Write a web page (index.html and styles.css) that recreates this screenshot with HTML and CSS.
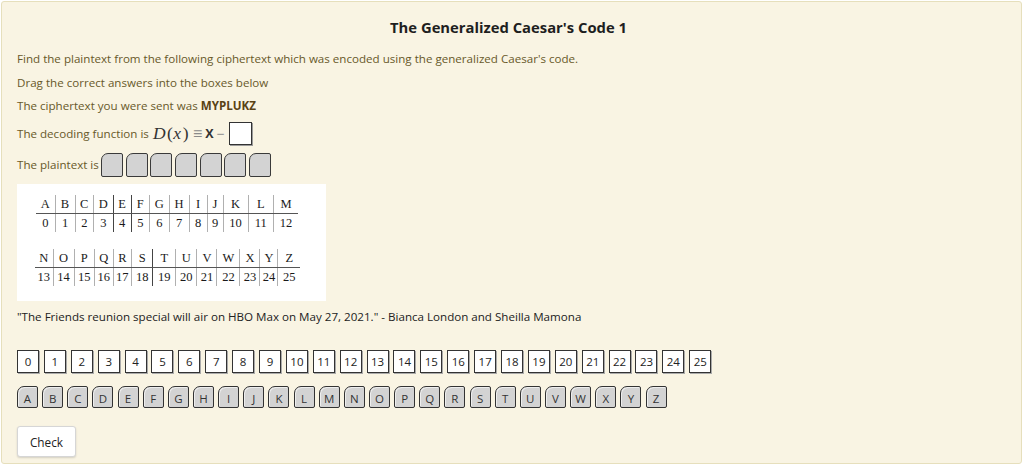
FILE: index.html
```html
<!DOCTYPE html>
<html>
<head>
<meta charset="utf-8">
<link rel="stylesheet" href="styles.css">
</head>
<body>
<div class="card">
  <h1 class="title">The Generalized Caesar's Code 1</h1>
  <p class="line">Find the plaintext from the following ciphertext which was encoded using the generalized Caesar's code.</p>
  <p class="line">Drag the correct answers into the boxes below</p>
  <p class="line">The ciphertext you were sent was <b class="cipher">MYPLUKZ</b></p>
  <div class="row decode">
    <span class="line-text">The decoding function is</span>
    <span class="math"><i>D</i>(<i>x</i>)</span>
    <span class="op eq">≡</span>
    <span class="bx">X</span>
    <span class="op">−</span>
    <span class="drop"></span>
  </div>
  <div class="row plain">
    <span class="line-text">The plaintext is</span>
    <span class="slots">
      <span class="slot"></span><span class="slot"></span><span class="slot"></span><span class="slot"></span><span class="slot"></span><span class="slot"></span><span class="slot"></span>
    </span>
  </div>
  <div class="img-box">
    <table class="alpha t1">
      <colgroup><col style="width:19px"><col style="width:20px"><col style="width:18.5px"><col style="width:19.5px"><col style="width:18px"><col style="width:18.5px"><col style="width:19.5px"><col style="width:20px"><col style="width:18px"><col style="width:16px"><col style="width:25px"><col style="width:25.5px"><col style="width:24.5px"></colgroup>
      <tr class="let"><td>A</td><td>B</td><td>C</td><td>D</td><td class="dk">E</td><td class="dk">F</td><td>G</td><td>H</td><td>I</td><td>J</td><td>K</td><td>L</td><td>M</td></tr>
      <tr class="num"><td>0</td><td>1</td><td>2</td><td>3</td><td class="dk">4</td><td class="dk">5</td><td>6</td><td>7</td><td>8</td><td>9</td><td>10</td><td>11</td><td>12</td></tr>
    </table>
    <table class="alpha t2">
      <colgroup><col style="width:18px"><col style="width:21px"><col style="width:20.5px"><col style="width:18.5px"><col style="width:18.7px"><col style="width:21.3px"><col style="width:22.5px"><col style="width:21.5px"><col style="width:20px"><col style="width:23px"><col style="width:20px"><col style="width:18px"><col style="width:22px"></colgroup>
      <tr class="let"><td>N</td><td>O</td><td>P</td><td>Q</td><td>R</td><td>S</td><td class="dk">T</td><td>U</td><td>V</td><td>W</td><td>X</td><td>Y</td><td>Z</td></tr>
      <tr class="num"><td>13</td><td>14</td><td>15</td><td>16</td><td>17</td><td>18</td><td class="dk">19</td><td>20</td><td>21</td><td>22</td><td>23</td><td>24</td><td>25</td></tr>
    </table>
  </div>
  <p class="quote">"The Friends reunion special will air on HBO Max on May 27, 2021." - Bianca London and Sheilla Mamona</p>
  <div class="tiles nums">
    <span class="ntile">0</span><span class="ntile">1</span><span class="ntile">2</span><span class="ntile">3</span><span class="ntile">4</span><span class="ntile">5</span><span class="ntile">6</span><span class="ntile">7</span><span class="ntile">8</span><span class="ntile">9</span><span class="ntile">10</span><span class="ntile">11</span><span class="ntile">12</span><span class="ntile">13</span><span class="ntile">14</span><span class="ntile">15</span><span class="ntile">16</span><span class="ntile">17</span><span class="ntile">18</span><span class="ntile">19</span><span class="ntile">20</span><span class="ntile">21</span><span class="ntile">22</span><span class="ntile">23</span><span class="ntile">24</span><span class="ntile">25</span>
  </div>
  <div class="tiles lets">
    <span class="ltile">A</span><span class="ltile">B</span><span class="ltile">C</span><span class="ltile">D</span><span class="ltile">E</span><span class="ltile">F</span><span class="ltile">G</span><span class="ltile">H</span><span class="ltile">I</span><span class="ltile">J</span><span class="ltile">K</span><span class="ltile">L</span><span class="ltile">M</span><span class="ltile">N</span><span class="ltile">O</span><span class="ltile">P</span><span class="ltile">Q</span><span class="ltile">R</span><span class="ltile">S</span><span class="ltile">T</span><span class="ltile">U</span><span class="ltile">V</span><span class="ltile">W</span><span class="ltile">X</span><span class="ltile">Y</span><span class="ltile">Z</span>
  </div>
  <button class="check">Check</button>
</div>
</body>
</html>
```
FILE: styles.css
```css
html, body {
  margin: 0;
  padding: 0;
  background: #ffffff;
}
body {
  font-family: "Open Sans", "Noto Sans", sans-serif;
  font-size: 11.6px;
  color: #68592a;
}
.card {
  margin: 1px 2px 1px 1px;
  border: 1px solid #e6dfbc;
  border-radius: 3px;
  background: #f9f4e3;
  padding: 15px 15px 7px 15px;
  height: 463px;
  box-sizing: border-box;
}
.title {
  margin: 0;
  text-align: center;
  font-size: 14.8px;
  line-height: 20px;
  font-weight: 700;
  color: #1e1e1e;
  padding-right: 6px;
}
.line {
  margin: 0;
  line-height: 16px;
}
.title + .line { margin-top: 14px; }
.line + .line { margin-top: 7.5px; }
.cipher {
  color: #5a4214;
  font-weight: 700;
}
.row {
  display: flex;
  align-items: center;
}
.decode {
  margin-top: 7.5px;
  height: 23px;
}
.line-text { margin-right: 4px; }
.math {
  font-family: "Liberation Serif", "DejaVu Serif", serif;
  font-size: 17.5px;
  color: #333;
  margin-right: 4px;
  letter-spacing: 0.5px;
}
.math i { padding-right: 1px; }
.op {
  color: #8a8a8a;
  font-size: 14px;
  margin-right: 3px;
}
.eq { font-size: 16px; }
.bx {
  font-weight: 700;
  color: #333;
  font-size: 12.5px;
  margin-right: 3px;
}
.drop {
  display: inline-block;
  width: 21px;
  height: 21px;
  background: #fff;
  border: 1px solid #333;
  box-shadow: 1px 1px 0 #9a9a9a;
  margin-left: 1px;
}
.plain {
  margin-top: 8px;
  height: 24px;
}
.plain .line-text { margin-right: 2px; }
.slots {
  display: flex;
  gap: 2.7px;
}
.slot {
  display: inline-block;
  background: #d3d3d3;
  border: 1.5px solid #3a3a3a;
  border-radius: 7px 2px 2px 2px;
  box-sizing: border-box;
  width: 22px;
  height: 24px;
}
.img-box {
  margin-top: 7.5px;
  width: 309px;
  height: 117px;
  background: #fff;
  box-sizing: border-box;
  padding: 11px 0 0 19px;
}
.alpha {
  border-collapse: collapse;
  table-layout: fixed;
  font-family: "Liberation Serif", "Times New Roman", serif;
  font-size: 12.5px;
  color: #1a1a1a;
}
.alpha td {
  height: 18px;
  padding: 0;
  text-align: center;
  border-left: 1px solid #b0b0b0;
  line-height: 18px;
}
.alpha td:first-child { border-left: none; }
.alpha td.dk { border-left-color: #444; }
.alpha .let td { border-bottom: 1px solid #555; }
.t2 {
  margin-top: 17px;
  margin-left: -1px;
}
.quote {
  margin: 8px 0 0 0;
  line-height: 16px;
  color: #222;
}
.tiles {
  display: flex;
}
.nums { margin-top: 25px; gap: 4.9px; }
.ntile {
  box-sizing: border-box;
  width: 22px;
  height: 23px;
  background: #fff;
  border: 1px solid #333;
  box-shadow: 1px 1px 0 #aaa;
  color: #222;
  font-size: 11.5px;
  display: flex;
  align-items: center;
  justify-content: center;
}
.lets {
  margin-top: 13px;
  gap: 4.15px;
}
.ltile {
  box-sizing: border-box;
  width: 21px;
  height: 22px;
  background: #d3d3d3;
  border: 1.5px solid #333;
  border-radius: 7px 2px 2px 2px;
  box-shadow: inset 1px 1px 0 #eee;
  color: #333;
  font-size: 11.5px;
  display: flex;
  align-items: center;
  justify-content: center;
  padding-top: 2px;
}
.check {
  display: block;
  margin-top: 18px;
  width: 59px;
  height: 31px;
  background: #fff;
  border: 1px solid #d6d6d6;
  border-radius: 3px;
  box-shadow: 0 1px 2px rgba(0,0,0,0.15);
  font-family: "Open Sans", "Noto Sans", sans-serif;
  font-size: 11.8px;
  color: #222;
  padding: 0;
}
```
